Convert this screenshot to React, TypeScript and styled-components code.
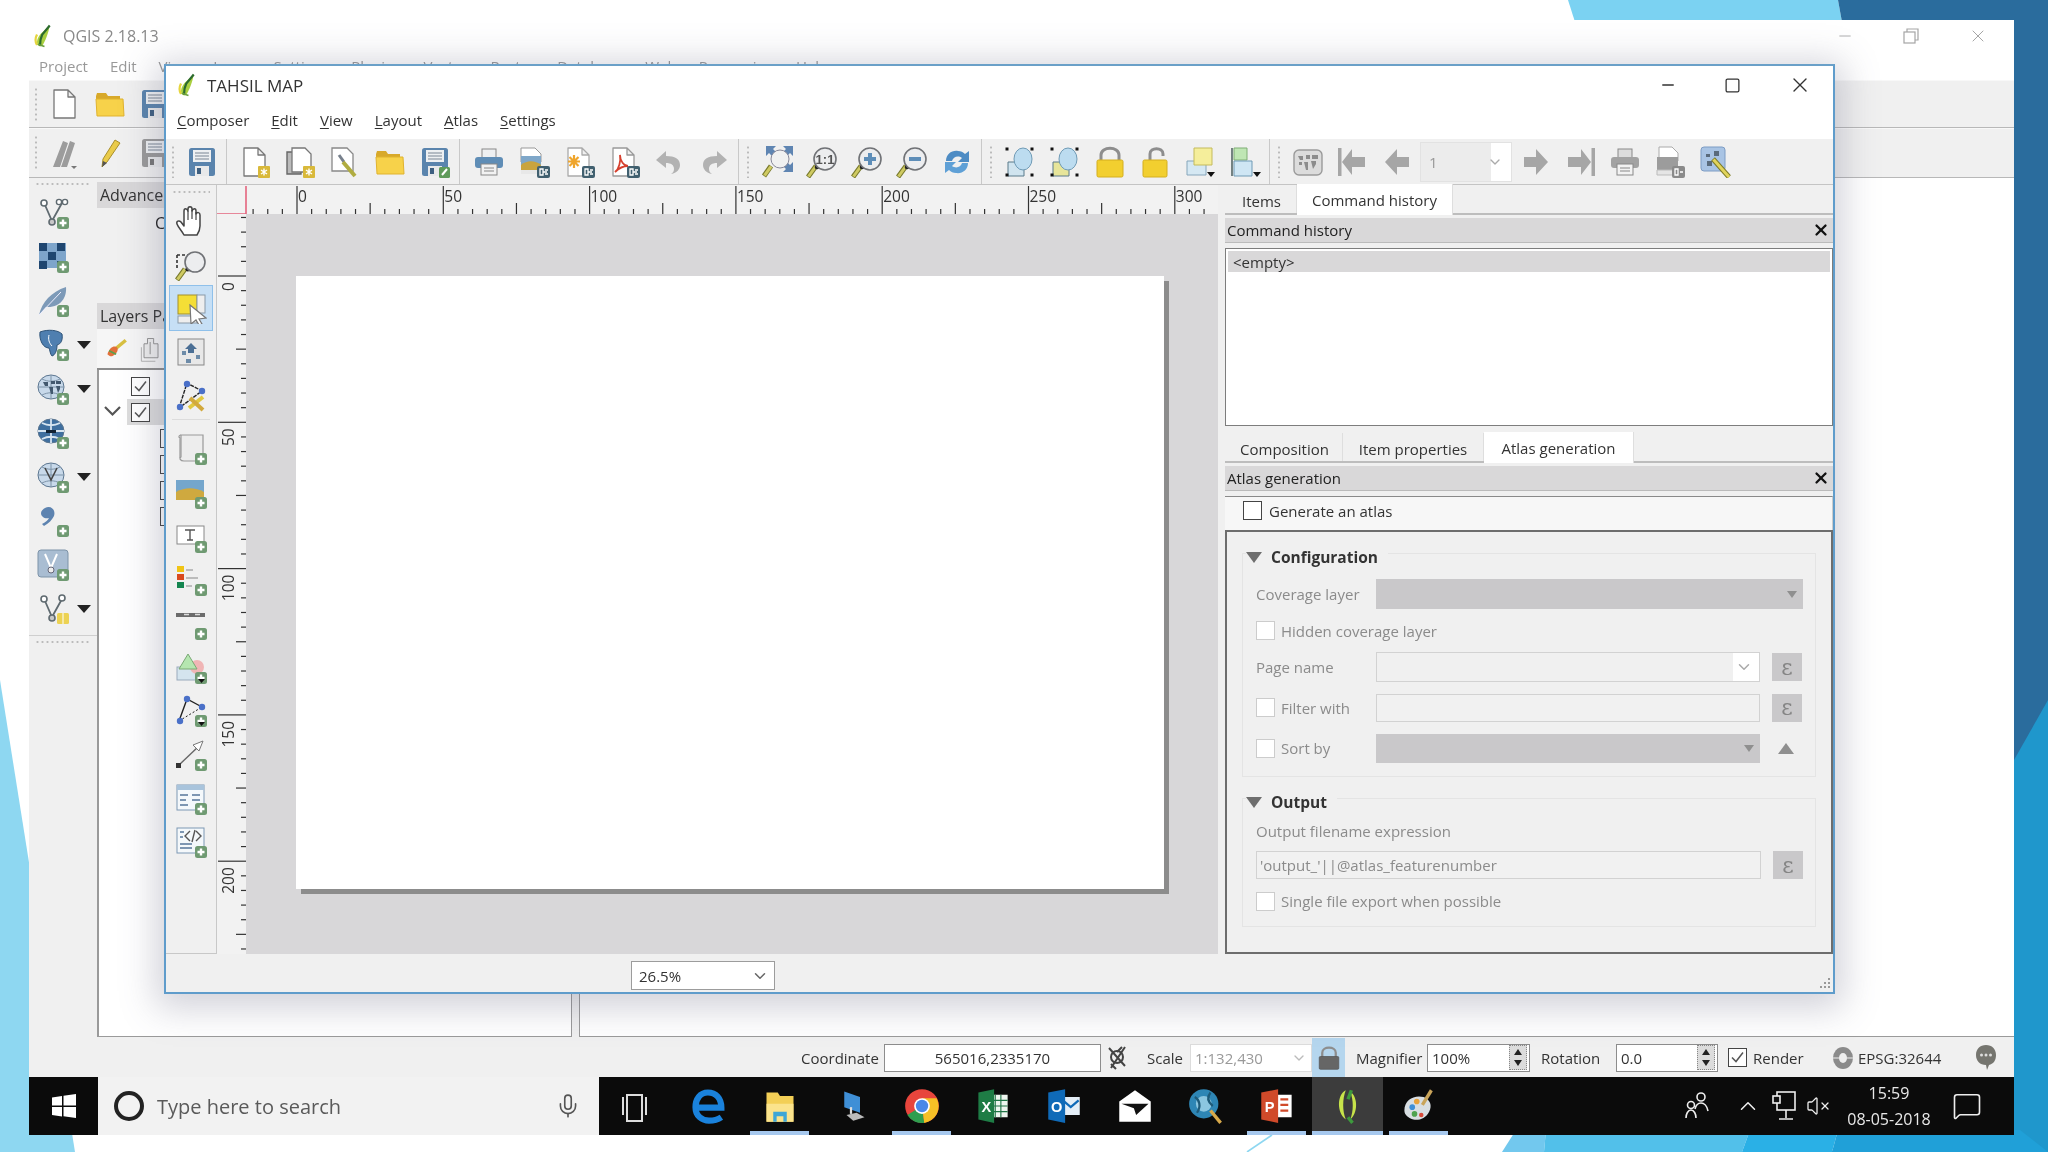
import React from 'react'
import styled, { createGlobalStyle } from 'styled-components'
import { ChevronDown, ChevronUp, Mic, MessageSquare, VolumeX, X, Minus, Square } from 'lucide-react'

const GlobalStyle = createGlobalStyle`
  html, body { margin: 0; padding: 0; background: #fff; }
  body { font-family: "Open Sans", "Noto Sans", "Liberation Sans", sans-serif; color: #222; }
  * { box-sizing: border-box; }
`

/* ---------- drawing helpers ---------- */
const Ico = ({ s = 32, children }: { s?: number; children: React.ReactNode }) => (
  <svg width={s} height={s} viewBox="0 0 32 32" fill="none">{children}</svg>
)
const Plus = ({ x = 20, y = 20 }: { x?: number; y?: number }) => (
  <g>
    <rect x={x} y={y} width="12" height="12" rx="2.5" fill="#6f9a72" />
    <path d={`M${x + 6} ${y + 2.5}v7M${x + 2.5} ${y + 6}h7`} stroke="#fff" strokeWidth="2.4" />
  </g>
)
const Star = ({ x = 19, y = 20 }: { x?: number; y?: number }) => (
  <g>
    <rect x={x} y={y} width="12" height="12" rx="1" fill="#d9b93a" />
    <path d={`M${x + 6} ${y + 2.5}v7M${x + 3} ${y + 4}l6 4M${x + 9} ${y + 4}l-6 4`} stroke="#fff" strokeWidth="1.4" />
  </g>
)
const Badge = () => (
  <g>
    <rect x="19" y="20" width="13" height="12" rx="2" fill="#41606f" />
    <path d="M22 23h3v6h-3zM27 24h3M27 28h3M25 26h4" stroke="#fff" strokeWidth="1.3" />
  </g>
)
const Doc = ({ fill = '#fff', line = '#777' }: { fill?: string; line?: string }) => (
  <path d="M5 2h14l7 7v21H5z M19 2v7h7" fill={fill} stroke={line} strokeWidth="1.3" strokeLinejoin="round" />
)
const Mag = ({ cx = 19, cy = 13, r = 11 }: { cx?: number; cy?: number; r?: number }) => (
  <g>
    <path d="M2 31l8-11" stroke="#77782c" strokeWidth="5" />
    <path d="M2.5 30.5l7.5-10.500" stroke="#cfca62" strokeWidth="3" />
    <circle cx={cx - r * 0.72} cy={cy + r * 0.72} r="2.4" fill="#222" />
    <circle cx={cx} cy={cy} r={r} fill="#ecedef" stroke="#707276" strokeWidth="1.6" />
  </g>
)

const QgisLogo = ({ s = 24 }: { s?: number }) => (
  <Ico s={s}>
    <path d="M25 2L13 13c-5 6-6 11-4 15l3 2 3-1c4-6 8-16 10-27z" fill="#a9cf3f" />
    <path d="M25 2L15 14c-2 4-3 9-3 15" stroke="#2c6b2f" strokeWidth="3" />
    <path d="M8 14c-2 4-3 9 0 14" stroke="#e6d53d" strokeWidth="3" />
    <path d="M9 27l9 3" stroke="#6a9f3e" strokeWidth="2" />
  </Ico>
)
const NewDoc = () => <Ico><Doc /></Ico>
const Folder = () => (
  <Ico>
    <path d="M2 8l1-3h9l2 3h12v4H2z" fill="#d8a92a" />
    <path d="M2 11h27l1 17H3z" fill="#f7d24a" stroke="#e0b32e" />
  </Ico>
)
const Save = ({ gray, tick }: { gray?: boolean; tick?: boolean }) => {
  const b = gray ? '#9a9a9a' : '#5a84ad'
  return (
    <Ico>
      <rect x="3" y="2" width="26" height="28" rx="2.5" fill={b} />
      <rect x="7" y="4" width="18" height="12" fill="#eef0f2" />
      <path d="M9 7h14M9 10h14M9 13h14" stroke="#7a8694" strokeWidth="1.2" />
      <rect x="9" y="20" width="14" height="10" fill="#e8e9ea" />
      <rect x="11" y="22" width="4" height="6" fill={gray ? '#777' : '#3e5f80'} />
      {tick && <rect x="20" y="21" width="11" height="11" rx="1.5" fill="#5f9a5a" />}
      {tick && <path d="M23 29l5-6" stroke="#fff" strokeWidth="2" />}
    </Ico>
  )
}
const NewComposer = () => <Ico><Doc /><Star /></Ico>
const DupComposer = () => (
  <Ico>
    <path d="M3 6h14v22H3z" fill="#bbb" stroke="#666" strokeWidth="1.4" />
    <path d="M8 2h13l6 6v18H8z" fill="#fff" stroke="#777" strokeWidth="1.3" />
    <Star />
  </Ico>
)
const Manager = () => (
  <Ico>
    <path d="M3 2h15l6 6v17H3z" fill="#fff" stroke="#888" strokeWidth="1.3" />
    <path d="M10 9l5 7" stroke="#77808c" strokeWidth="3" />
    <path d="M14 16l12 14" stroke="#b0ac40" strokeWidth="4" />
  </Ico>
)
const Printer = ({ gray }: { gray?: boolean }) => (
  <Ico>
    <rect x="9" y="3" width="14" height="9" fill={gray ? '#dcdcdc' : '#eef0f2'} stroke="#888" />
    <rect x="2" y="11" width="28" height="11" rx="3" fill={gray ? '#a2a2a2' : '#5f8db6'} />
    <rect x="8" y="18" width="16" height="11" fill="#f2f2f2" stroke="#888" />
    <path d="M11 22h10M11 25h10" stroke="#888" />
  </Ico>
)
const ExportImg = () => (
  <Ico>
    <path d="M3 2h14l6 6v8H3z" fill="#fff" stroke="#999" />
    <rect x="3" y="10" width="20" height="14" fill="#7fa7c9" />
    <path d="M3 24v-5c6-5 14-5 20 0v5z" fill="#c9a43e" />
    <path d="M3 24h18v4H3z" fill="#e8e8e8" />
    <Badge />
  </Ico>
)
const ExportSvg = () => (
  <Ico>
    <Doc line="#aaa" />
    <path d="M11 9v13M5 15.500h12M6.500 11l9 9M15.500 11l-9 9" stroke="#efa52c" strokeWidth="2.2" />
    <Badge />
  </Ico>
)
const ExportPdf = () => (
  <Ico>
    <Doc line="#999" />
    <path d="M7 26c4-3 6-11 5-17 0 6 4 11 8 11-5 0-9 2-13 6z" stroke="#d6402e" strokeWidth="1.8" />
    <Badge />
  </Ico>
)
const Undo = ({ flip }: { flip?: boolean }) => (
  <Ico>
    <g transform={flip ? 'matrix(-1 0 0 1 32 0)' : undefined}>
      <path d="M13 5L3 14l10 8v-5c5 0 8 2 8 6 0 2-1 4-3 5 6-1 9-5 9-9 0-6-5-9-14-9z" fill="#b2b2b2" />
    </g>
  </Ico>
)
const ZoomFull = () => (
  <Ico>
    <path d="M5 0h10l-3 3 3 3-4 4-3-3-3 3zM32 0H22l3 3-3 3 4 4 3-3 3 3zM32 26H22l3-3-3-3 4-4 3 3 3-3z" fill="#5f85b2" />
    <circle cx="19" cy="13" r="9" fill="#f1f1f1" stroke="#889" />
    <path d="M3 30l7-10" stroke="#77782c" strokeWidth="5" />
    <path d="M3.500 29.500l6.500-9" stroke="#cfca62" strokeWidth="3" />
  </Ico>
)
const Zoom11 = () => (
  <Ico>
    <Mag />
    <text x="19" y="18" fontSize="13" fontWeight="700" textAnchor="middle" fill="#555" fontFamily="Liberation Sans">1:1</text>
  </Ico>
)
const ZoomIn = ({ minus }: { minus?: boolean }) => (
  <Ico>
    <Mag />
    <path d={minus ? 'M13 13h12' : 'M13 13h12M19 7v12'} stroke="#5d8db8" strokeWidth="4" />
  </Ico>
)
const Refresh = () => (
  <Ico>
    <path d="M5 15c0-7 6-11 12-10 3 0 5 1 7 3l4-3v11H17l4-4c-4-3-9-1-10 3z" fill="#4e8cc4" />
    <path d="M27 17c0 7-6 11-12 10-3 0-5-1-7-3l-4 3V16h11l-4 4c4 3 9 1 10-3z" fill="#5fa0d6" />
  </Ico>
)
const Group = ({ un }: { un?: boolean }) => (
  <Ico>
    <path d="M4 16h16v14H4z" fill={un ? '#e7e59a' : '#d0e4ef'} stroke="#5a7a8a" />
    <ellipse cx="19" cy="13" rx="9" ry="11" fill="#bcdcf0" stroke="#6f9ab5" />
    {[[3, 3], [28, 3], [3, 29], [28, 29]].map(([x, y], i) => <rect key={i} x={x - 1.5} y={y - 1.5} width="3" height="3" fill="#111" />)}
  </Ico>
)
const Lock = ({ open, gray, s }: { open?: boolean; gray?: boolean; s?: number }) => (
  <Ico s={s}>
    <path d={open ? 'M11 15V8c0-7 13-7 13 0v2' : 'M7 15V9c0-9 18-9 18 0v6'} stroke="#8d8d8d" strokeWidth="3" />
    <rect x={open ? 4 : 3} y="14" width={open ? 24 : 26} height="17" rx="1.5" fill={gray ? '#666' : '#f2cf2f'} stroke={gray ? '#555' : '#d4ae1e'} />
  </Ico>
)
const Raise = () => (
  <Ico>
    <path d="M3 15h19v14H3z" fill="#d5e8f3" stroke="#86a6bb" />
    <path d="M10 2h18v17H10z" fill="#f5ee9b" stroke="#c4bb5c" />
    <path d="M23 26h8l-4 5z" fill="#111" />
  </Ico>
)
const Align = () => (
  <Ico>
    <path d="M3 2v28" stroke="#566" strokeWidth="1.6" />
    <path d="M5 2h13v12H5z" fill="#bfe6b4" stroke="#7eae74" />
    <path d="M5 15h18v15H5z" fill="#cfe6f4" stroke="#6f9ab5" />
    <path d="M24 26h8l-4 5z" fill="#111" />
  </Ico>
)
const AtlasMap = () => (
  <Ico>
    <rect x="2" y="4" width="28" height="25" rx="5" fill="#dcdcdc" stroke="#9a9a9a" strokeWidth="1.4" />
    <path d="M6 10h5v4H8zM14 9h4v4h-4zM20 9h6v4h-6zM12 16h4v8h-2zM19 15h5v3l-3 5zM7 16h3v3H7z" fill="#8c8c8c" />
  </Ico>
)
const Arrow = ({ dir, end }: { dir: 'l' | 'r'; end?: boolean }) => (
  <Ico>
    <g transform={dir === 'r' ? 'matrix(-1 0 0 1 32 0)' : undefined}>
      <path d={end ? 'M15 3L5 16l10 13v-8h13v-10H15z' : 'M15 3L3 16l12 13v-8h12v-10H15z'} fill="#a6a6a6" />
      {end && <rect x="1" y="2" width="3.5" height="28" fill="#a6a6a6" />}
    </g>
  </Ico>
)
const ExportGray = () => (
  <Ico>
    <path d="M5 1h13l6 6v8H5z" fill="#fff" stroke="#aaa" />
    <rect x="3" y="11" width="21" height="13" fill="#9c9c9c" />
    <path d="M3 24h21v5H3z" fill="#e5e5e5" stroke="#bbb" />
    <rect x="18" y="20" width="13" height="12" rx="2" fill="#8a8a8a" />
    <path d="M21 23h3v6h-3zM26 26h3" stroke="#fff" strokeWidth="1.3" />
  </Ico>
)
const AtlasSettings = () => (
  <Ico>
    <rect x="2" y="1" width="24" height="24" rx="3" fill="#a9c4e4" stroke="#7d9cc4" />
    <path d="M7 8h4v3H7zM15 5h5v5h-5zM8 15h5v5H8z" fill="#5a6b7c" />
    <path d="M14 13l16 18" stroke="#7c7a26" strokeWidth="5" />
    <path d="M14.500 13.500l15.500 17.500" stroke="#e1d45c" strokeWidth="3" />
  </Ico>
)
const Hand = () => (
  <Ico>
    <path d="M9 30c-2-4-6-8-7-11-1-3 2-4 4-2l3 4V6c0-3 3-3 4 0V4c0-3 4-3 4 0v2c1-3 4-3 4 0v3c1-2 4-2 4 1v11c0 4-1 6-3 9z" fill="#fff" stroke="#444" strokeWidth="1.5" strokeLinejoin="round" />
    <path d="M13 6v9M17 5v9M21 7v8" stroke="#444" strokeWidth="1.2" />
  </Ico>
)
const MoveContent = () => (
  <Ico>
    <rect x="3" y="3" width="26" height="26" fill="#e8e8e8" stroke="#888" />
    <path d="M16 7l6 6h-3v4h-6v-4h-3z" fill="#4b6f95" />
    <path d="M7 15h4v4H7zM21 19h4v4h-4zM11 23h5v4h-5z" fill="#6d8ba8" />
  </Ico>
)
const ZoomRect = () => (
  <Ico>
    <path d="M2 6h13M2 6v15" stroke="#333" strokeWidth="1.6" strokeDasharray="3 2" />
    <Mag cx={20} cy={13} r={10} />
  </Ico>
)
const SelectTool = () => (
  <Ico>
    <rect x="3" y="3" width="19" height="19" fill="#f4de36" stroke="#a38f2c" />
    <rect x="22" y="3" width="8" height="18" fill="#eee" stroke="#8a9aa8" />
    <rect x="3" y="24" width="19" height="7" fill="#eee" stroke="#8a9aa8" />
    <path d="M15 13l16 13-7 1 3 5-3 1-3-5-5 4z" fill="#fff" stroke="#777" strokeWidth="1.2" />
  </Ico>
)
const NodeTool = () => (
  <Ico>
    <path d="M4 28L12 3l15 8z" stroke="#222" strokeWidth="1.4" strokeDasharray="4 1" />
    <circle cx="12" cy="4" r="3.200" fill="#4a70c8" /><circle cx="27" cy="11" r="3.200" fill="#4a70c8" /><circle cx="5" cy="27" r="3.200" fill="#4a70c8" />
    <path d="M14 28l14-11" stroke="#e0c840" strokeWidth="4" /><path d="M15 18l13 12" stroke="#d2a93c" strokeWidth="4" />
  </Ico>
)
const AddMap = () => (
  <Ico>
    <path d="M6 2h22v26H9c-4 0-5-3-3-4z" fill="#ededed" stroke="#999" strokeWidth="1.2" />
    <path d="M6 2c-2 0-3 2-1 3v20" stroke="#999" strokeWidth="1.2" />
    <Plus />
  </Ico>
)
const AddImage = () => (
  <Ico>
    <rect x="1" y="3" width="28" height="20" fill="#74a6cc" />
    <path d="M1 23v-8c9-5 19-5 28 0v8z" fill="#cfa93f" />
    <Plus />
  </Ico>
)
const AddLabel = () => (
  <Ico>
    <rect x="2" y="5" width="27" height="18" fill="#fff" stroke="#888" />
    <path d="M10 9h10M15 9v10M12 19h6" stroke="#555" strokeWidth="1.4" />
    <Plus />
  </Ico>
)
const AddLegend = () => (
  <Ico>
    <rect x="2" y="2" width="7" height="6" fill="#f0c415" /><rect x="2" y="10" width="7" height="6" fill="#d94a1e" /><rect x="2" y="18" width="7" height="6" fill="#14854f" />
    <path d="M11 6h7M11 14h12M11 22h6" stroke="#aaa" strokeWidth="1.6" />
    <Plus />
  </Ico>
)
const AddBar = () => (
  <Ico>
    <rect x="1" y="5" width="29" height="4" fill="#6b6b6b" />
    <path d="M9 6.500h5M20 6.500h5" stroke="#ddd" strokeWidth="1.400" />
    <Plus />
  </Ico>
)
const AddShape = () => (
  <Ico>
    <rect x="2" y="15" width="21" height="13" fill="#d4e4ee" stroke="#9ab" />
    <circle cx="22" cy="15" r="7" fill="#f0b5b5" />
    <path d="M13 2l9 15H4z" fill="#b5e6b0" stroke="#7aa975" />
    <Plus />
    <path d="M23 27h7l-3.500 4z" fill="#111" />
  </Ico>
)
const AddNode = () => (
  <Ico>
    <path d="M4 26L12 4l15 8" stroke="#222" strokeWidth="1.400" /><path d="M4 26l23-14" stroke="#222" strokeDasharray="2 2" />
    <circle cx="12" cy="4" r="3.200" fill="#4a70c8" /><circle cx="27" cy="12" r="3.200" fill="#4a70c8" /><circle cx="5" cy="26" r="3.200" fill="#4a70c8" />
    <Plus />
    <path d="M23 27h7l-3.500 4z" fill="#111" />
  </Ico>
)
const AddArrow = () => (
  <Ico>
    <path d="M4 26L24 7" stroke="#666" strokeWidth="1.400" />
    <rect x="1" y="24" width="5" height="5" fill="#333" />
    <path d="M28 2l-10 4 6 6z" fill="#fff" stroke="#777" />
    <Plus />
  </Ico>
)
const AddTable = () => (
  <Ico>
    <rect x="2" y="2" width="27" height="25" fill="#f4f8fb" stroke="#7c98b4" />
    <rect x="2" y="2" width="27" height="5" fill="#a9c4dc" />
    <path d="M5 12h8M17 12h8M5 17h6M17 17h8M5 22h8" stroke="#55769a" strokeWidth="1.4" />
    <Plus />
  </Ico>
)
const AddHtml = () => (
  <Ico>
    <rect x="2" y="2" width="27" height="25" fill="#f4f8fb" stroke="#7c98b4" />
    <path d="M15 5l-5 5 5 5M21 5l5 5-5 5M20 4l-3 12" stroke="#555" strokeWidth="1.400" />
    <path d="M5 6h4M5 11h3M5 18h12M5 22h12" stroke="#55769a" strokeWidth="1.600" />
    <Plus />
  </Ico>
)
const AddLine = () => (
  <Ico>
    <path d="M8 8L15 24 25 6" stroke="#5f6a70" strokeWidth="1.800" />
    <circle cx="7" cy="6" r="3" fill="#fff" stroke="#5f6a70" strokeWidth="1.600" /><circle cx="15" cy="25" r="3" fill="#c8c8c8" stroke="#5f6a70" strokeWidth="1.600" />
    <circle cx="22" cy="5" r="2.600" fill="#fff" stroke="#5f6a70" strokeWidth="1.400" /><circle cx="28" cy="5" r="2.600" fill="#fff" stroke="#5f6a70" strokeWidth="1.400" />
    <Plus />
  </Ico>
)
const AddGrid = () => (
  <Ico>
    <rect x="2" y="2" width="27" height="25" fill="#7ea5cb" />
    {[[2, 2], [20, 2], [11, 11], [2, 20], [20, 20]].map(([x, y], i) => <rect key={i} x={x} y={y} width="8" height="8" fill="#1f4670" />)}
    <Plus />
  </Ico>
)
const Feather = () => (
  <Ico>
    <path d="M2 30C5 17 14 7 29 2c1 10-5 21-20 20z" fill="#7d9ab8" />
    <path d="M2 30L24 7" stroke="#eef" strokeWidth="1" />
    <Plus />
  </Ico>
)
const Elephant = () => (
  <Ico>
    <path d="M3 3c8-3 18-2 22 2 1 6-1 10-5 11 0 6-2 10-5 11-2-2-2-6-3-8-6 0-10-8-9-16z" fill="#4f7fb0" stroke="#2e5378" />
    <path d="M12 6c-1 4 0 8 3 11" stroke="#fff" />
    <Plus />
  </Ico>
)
const Globe = ({ v, dark }: { v?: boolean; dark?: boolean }) => (
  <Ico>
    <ellipse cx="14" cy="14" rx="13" ry="12" fill={dark ? '#3f6f9f' : '#c8d9ea'} stroke="#5c7690" />
    <path d="M1 14h26M14 2v24M5 6c6 3 12 3 18 0M5 22c6-3 12-3 18 0" stroke={dark ? '#d6e4f0' : '#7d93a8'} strokeWidth={dark ? 1.800 : 1} />
    {dark && <path d="M9 13h10v3H9z" fill="#123" />}
    {v && <path d="M8 7l6 12 6-12" stroke="#444" strokeWidth="1.600" />}
    {!v && !dark && <path d="M6 9h5v4H8zM14 8h4v3h-4zM19 8h5v3h-5zM12 14h4v7h-2zM19 13h4v3l-2 4z" fill="#42586e" />}
    <Plus />
  </Ico>
)
const Comma = () => (
  <Ico>
    <path d="M8 3c6-3 11 2 9 8-2 4-5 7-10 10l-2-2c4-2 6-4 7-6-4 1-8-1-8-5 0-2 2-4 4-5z" fill="#5d83b0" />
    <Plus />
  </Ico>
)
const Wms = () => (
  <Ico>
    <rect x="1" y="1" width="30" height="27" rx="3" fill="#a9bdd2" stroke="#7d93a8" />
    <path d="M8 5l6 14 6-14" stroke="#fff" strokeWidth="2" /><circle cx="14" cy="21" r="3" fill="#eee" stroke="#667" />
    <Plus />
  </Ico>
)
const Line2 = () => (
  <Ico>
    <path d="M8 8L15 24 25 6" stroke="#5f6a70" strokeWidth="1.800" />
    <circle cx="7" cy="6" r="3" fill="#fff" stroke="#5f6a70" strokeWidth="1.600" /><circle cx="15" cy="25" r="3" fill="#c8c8c8" stroke="#5f6a70" strokeWidth="1.600" />
    <circle cx="25" cy="5" r="3" fill="#fff" stroke="#5f6a70" strokeWidth="1.600" />
    <rect x="20" y="20" width="12" height="11" rx="1.500" fill="#ecd253" />
    <path d="M26 20v11" stroke="#fff" />
  </Ico>
)
const Caret = () => <svg width="14" height="8" viewBox="0 0 14 8"><path d="M0 0h14L7 8z" fill="#222" /></svg>
const Pencils = () => (
  <Ico>
    <path d="M4 30L14 4l5 2-8 24zM12 30L21 4l5 2-8 24z" fill="#9c9c9c" />
    <path d="M22 29h6l-3 3z" fill="#777" />
  </Ico>
)
const Pencil = () => (
  <Ico>
    <path d="M8 30l1-8L21 3l5 3-13 19z" fill="#eacb4a" stroke="#a98f2c" />
    <path d="M8 30l1-6 4 2z" fill="#555" />
  </Ico>
)
const Brush = () => (
  <Ico s={28}>
    <path d="M26 6L14 16" stroke="#d8c041" strokeWidth="4" />
    <path d="M5 22c3-8 7-10 11-8 2 3 0 7-5 10-2 1-4 0-6-2z" fill="#e2703a" />
    <path d="M7 18l8 4" stroke="#5ba04d" strokeWidth="2" />
  </Ico>
)
const Clip = () => (
  <Ico s={28}>
    <path d="M12 4h7v6h5v16H8V10h4z" fill="#eee" stroke="#888" />
    <path d="M5 14v16h16" stroke="#aaa" />
    <path d="M15 8v14" stroke="#888" />
  </Ico>
)
const Proj = () => (
  <svg width="17" height="13" viewBox="0 0 17 13"><path d="M1 1l7.500 7.500 7.500-7.500" stroke="#555" strokeWidth="2.200" fill="none" /></svg>
)
const RestoreIcon = () => (
  <svg width="16" height="16" viewBox="0 0 16 16" fill="none" stroke="#a5a5a5" strokeWidth="1.200"><path d="M4 4V1h11v11h-3" /><rect x="1" y="4" width="11" height="11" /></svg>
)
const TickMark = () => (
  <svg width="17" height="17" viewBox="0 0 17 17" fill="none"><path d="M3 8.500l4 4 7-9" stroke="#555" strokeWidth="1.500" /></svg>
)

/* taskbar logos */
const WinLogo = () => (
  <svg width="24" height="24" viewBox="0 0 24 24"><path d="M0 3.500L10 2v9.500H0zM11.500 1.800L24 0v11.500H11.500zM0 13h10v9.500L0 21zM11.500 13H24v11l-12.500-1.800z" fill="#fff" /></svg>
)
const EdgeLogo = () => (
  <Ico s={36}>
    <path d="M6 17.500h21C27 9 22 4 15 4 8 4 4 10 4 17c0 8 6 12 12 12 4 0 8-1 11-3" stroke="#1a82dc" strokeWidth="5.500" />
  </Ico>
)
const ChromeLogo = () => (
  <Ico s={36}>
    <circle cx="16" cy="16" r="15" fill="#e8453c" />
    <path d="M16 16L3 24a15 15 0 0 0 15 7z" fill="#2f9e4f" />
    <path d="M16 16l2 15a15 15 0 0 0 11-22H16z" fill="#f6c026" />
    <circle cx="16" cy="16" r="7" fill="#fff" /><circle cx="16" cy="16" r="5.500" fill="#4a88e8" />
  </Ico>
)
const ExplorerLogo = () => (
  <Ico s={36}>
    <path d="M4 4h10l2 3h12v23H4z" fill="#f3cf56" />
    <path d="M4 14h24v16H4z" fill="#fbe38c" />
    <path d="M10 21h12v9h-3v-5h-6v5h-3z" fill="#3ea6d6" />
  </Ico>
)
const PcLogo = () => (
  <Ico s={36}>
    <path d="M10 3l14 5v14l-14-5z" fill="#3f8fd6" />
    <path d="M12 24l9-2 7 4-10 3z" fill="#bbb" />
    <path d="M16 17v6" stroke="#ddd" strokeWidth="2" />
  </Ico>
)
const ExcelLogo = () => (
  <Ico s={36}>
    <rect x="15" y="6" width="14" height="20" fill="#eef5ef" />
    <path d="M18 6v20M23 6v20M15 11h14M15 16h14M15 21h14" stroke="#1f7345" />
    <path d="M3 4l14-3v30L3 28z" fill="#1e7c45" />
    <text x="10" y="21" fontSize="13" fontWeight="700" fill="#fff" textAnchor="middle" fontFamily="Liberation Sans">X</text>
  </Ico>
)
const OutlookLogo = () => (
  <Ico s={36}>
    <rect x="14" y="8" width="16" height="16" fill="#e4eef7" />
    <path d="M15 11l7 6 7-6" stroke="#0f6ab8" strokeWidth="2" />
    <path d="M2 4l15-3v30L2 28z" fill="#0f6ab8" />
    <text x="9.500" y="21" fontSize="13" fontWeight="700" fill="#fff" textAnchor="middle" fontFamily="Liberation Sans">O</text>
  </Ico>
)
const MailLogo = () => (
  <Ico s={36}>
    <path d="M2 12L16 2l14 10v18H2z" fill="#fff" />
    <path d="M4 14l24 0-11 10-2-6z" fill="#111" />
  </Ico>
)
const SearchGlobe = () => (
  <Ico s={36}>
    <circle cx="14" cy="14" r="13" fill="#2e86b5" />
    <circle cx="14" cy="14" r="7" fill="#8cc6e0" />
    <path d="M6 8c4 2 6 8 2 14M20 4c-3 4-3 8 2 12" stroke="#1e5a78" strokeWidth="2" />
    <path d="M20 20l9 11" stroke="#d8a94a" strokeWidth="3" />
  </Ico>
)
const PptLogo = () => (
  <Ico s={36}>
    <rect x="14" y="6" width="15" height="20" fill="#fff" />
    <path d="M19 10h7M19 15h7M19 20h7" stroke="#d04a2a" strokeWidth="2" />
    <path d="M2 4l15-3v30L2 28z" fill="#d04a2a" />
    <text x="9.500" y="21" fontSize="13" fontWeight="700" fill="#fff" textAnchor="middle" fontFamily="Liberation Sans">P</text>
  </Ico>
)
const QgisTask = () => (
  <Ico s={36}>
    <path d="M14 2C6 6 6 22 14 28c-3-8-3-18 0-26zM18 3c7 5 7 19 0 25 3-8 3-17 0-25z" fill="#c7e34a" />
    <path d="M16 26l4 5" stroke="#3d9a3d" strokeWidth="3" />
    <path d="M19 2l-3 8" stroke="#3d9a3d" strokeWidth="3" />
  </Ico>
)
const PaintLogo = () => (
  <Ico s={36}>
    <path d="M3 20C3 10 12 6 20 8c6 2 8 8 5 13-3 6-9 8-14 7-4-1-8-4-8-8z" fill="#d8dee2" />
    <circle cx="10" cy="17" r="2.500" fill="#3f8fd6" /><circle cx="14" cy="12" r="2.500" fill="#e8a23a" /><circle cx="12" cy="23" r="2.500" fill="#4fa34f" /><circle cx="18" cy="24" r="2" fill="#d84a3a" />
    <path d="M19 15L27 2" stroke="#c9a45a" strokeWidth="3" />
  </Ico>
)
const People = () => (
  <svg width="27" height="30" viewBox="0 0 27 30" fill="none" stroke="#eee" strokeWidth="1.600">
    <circle cx="17" cy="6" r="4" /><path d="M11 18c1-4 3-6 6-6s6 3 7 8" />
    <circle cx="7" cy="14" r="3.500" /><path d="M2 27c0-4 2-8 5-8s5 4 5 8" />
  </svg>
)
const Network = () => (
  <svg width="26" height="32" viewBox="0 0 26 32" fill="none" stroke="#eee" strokeWidth="1.600">
    <rect x="6" y="2" width="18" height="18" /><path d="M15 20v8M8 29h14" /><rect x="2" y="6" width="7" height="7" fill="#111" />
  </svg>
)
const MsgBubble = () => (
  <svg width="22" height="28" viewBox="0 0 22 28"><path d="M11 1c6 0 10 4 10 10s-3 9-7 10l-2 5-1-5C5 21 1 17 1 11S5 1 11 1z" fill="#75756f" /><circle cx="6.500" cy="11" r="1.500" fill="#ddd" /><circle cx="11" cy="11" r="1.500" fill="#ddd" /><circle cx="15.500" cy="11" r="1.500" fill="#ddd" /></svg>
)
const Globe2 = () => (
  <svg width="22" height="24" viewBox="0 0 22 24"><ellipse cx="11" cy="12" rx="10" ry="11" fill="#8b8b8b" /><ellipse cx="11" cy="12" rx="4" ry="5" fill="#eee" /><path d="M1 12h6M15 12h6" stroke="#eee" /></svg>
)
const Compass = () => (
  <svg width="24" height="28" viewBox="0 0 24 28" fill="none" stroke="#444" strokeWidth="2"><path d="M4 4l16 18M20 3L6 24" /><circle cx="12" cy="13" r="6" /><path d="M6 20l5 5M17 3l-5 5" /></svg>
)
const Grip = () => (
  <svg width="10" height="10" viewBox="0 0 10 10" fill="#999"><rect x="8" y="0" width="2" height="2" /><rect x="4" y="4" width="2" height="2" /><rect x="8" y="4" width="2" height="2" /><rect x="0" y="8" width="2" height="2" /><rect x="4" y="8" width="2" height="2" /><rect x="8" y="8" width="2" height="2" /></svg>
)

/* ---------- rulers: ticks come from the scale ---------- */
const HORIZONTAL_ORIGIN = 80
const VERTICAL_ORIGIN = 62
const MM = 2.926

const HRulerDrawing = () => {
  const ticks: React.ReactNode[] = []
  for (let u = -25; u <= 310; u += 5) {
    const x = HORIZONTAL_ORIGIN + u * MM
    if (x < 30) continue
    const top = u % 50 === 0 ? 1 : u % 25 === 0 ? 18 : 24
    ticks.push(<line key={u} x1={x} x2={x} y1={top} y2={29} stroke="#333" strokeWidth="1.200" />)
    if (u % 50 === 0 && u >= 0) ticks.push(<text key={`t${u}`} x={x + 1} y={17} fontSize="15.500" fill="#333" fontFamily="Open Sans">{u}</text>)
  }
  return <svg width="1001" height="29" viewBox="0 0 1001 29">{ticks}<path d="M29 1v28H0" stroke="#e4647e" strokeWidth="1.600" fill="none" /></svg>
}
const VRulerDrawing = () => {
  const ticks: React.ReactNode[] = []
  for (let u = -20; u <= 230; u += 5) {
    const y = VERTICAL_ORIGIN + u * MM
    if (y < 3 || y > 738) continue
    const left = u % 50 === 0 ? 1 : u % 25 === 0 ? 19 : 24
    ticks.push(<line key={u} x1={left} x2={29} y1={y} y2={y} stroke="#333" strokeWidth="1.200" />)
    if (u % 50 === 0 && u >= 0) ticks.push(<text key={`t${u}`} transform={`translate(17 ${y + 6}) rotate(-90)`} textAnchor="end" fontSize="15.500" fill="#333" fontFamily="Open Sans">{u}</text>)
  }
  return <svg width="29" height="741" viewBox="0 0 29 741">{ticks}</svg>
}

/* ---------- page ---------- */
const Desktop = styled.div`
  position: relative;
  width: 2048px;
  height: 1152px;
  overflow: hidden;
  background: #fff;
  padding: 20px 34px 17px 29px;
  filter: blur(0.45px);
`
const Backdrop = styled.svg`
  position: absolute;
  inset: 0;
`
const MainWindow = styled.div`
  position: relative;
  display: flex;
  flex-direction: column;
  height: 100%;
  background: #fff;
`
const TitleBar = styled.div`
  display: flex;
  align-items: center;
  height: 32px;
  padding-left: 2px;
  font-size: 16px;
  color: #8a8a8a;
  gap: 8px;
`
const MainControls = styled.div`
  display: flex;
  margin-left: auto;
  color: #a5a5a5;
  margin-right: 26px;
  gap: 49px;
  align-items: center;
`
const MainMenu = styled.div`
  display: flex;
  height: 28px;
  align-items: center;
  padding-left: 10px;
  gap: 22px;
  font-size: 15px;
  color: #999;
  overflow: hidden;
`
const MainToolbar = styled.div<{ $h: number }>`
  display: flex;
  align-items: center;
  height: ${p => p.$h}px;
  background: #f0f0f0;
  border-bottom: 1px solid #b8b8b8;
  border-top: 1px solid #f8f8f8;
`
const GripV = styled.span`
  width: 4px;
  align-self: stretch;
  margin: 6px 4px 6px 5px;
  background: radial-gradient(circle, #bbb 1px, transparent 1.200px) 0 0 / 4px 5px;
`
const GripH = styled.div`
  height: 4px;
  margin: 4px 6px 5px;
  background: radial-gradient(circle, #bbb 1px, transparent 1.200px) 0 0 / 5px 4px;
`
const MainSlot = styled.span`
  display: flex;
  width: 45px;
  justify-content: center;
  align-items: center;
  flex: none;
`
const Workspace = styled.div`
  display: flex;
  flex: 1;
  min-height: 0;
  background: #f0f0f0;
`
const SideBar = styled.div`
  width: 68px;
  flex: none;
  display: flex;
  flex-direction: column;
`
const SideIcons = styled.div`
  border-bottom: 1px solid #cfcfcf;
  padding-bottom: 4px;
`
const SideRow = styled.div`
  display: flex;
  align-items: center;
  height: 44px;
  padding-left: 8px;
  gap: 8px;
`
const Docks = styled.div`
  width: 475px;
  flex: none;
  display: flex;
  flex-direction: column;
  border-right: 1px solid #9a9a9a;
  padding-top: 4px;
`
const DockTitle = styled.div`
  height: 26px;
  display: flex;
  align-items: center;
  background: #d9d8d9;
  padding-left: 3px;
  font-size: 16px;
  color: #333;
`
const DockFill = styled.div`
  height: 95px;
  padding: 4px 0 0 58px;
  font-size: 16px;
`
const DockTools = styled.div`
  display: flex;
  align-items: center;
  height: 41px;
  gap: 6px;
  padding-left: 6px;
  background: #f6f6f6;
  border-bottom: 2px solid #8c8c8c;
`
const LayerTree = styled.div`
  flex: 1;
  background: #fff;
  border-left: 2px solid #9a9a9a;
  border-bottom: 1px solid #9a9a9a;
  padding-top: 3px;
`
const LayerRow = styled.div<{ $selected?: boolean; $indent?: number }>`
  display: flex;
  align-items: center;
  height: 26px;
  padding-left: ${p => p.$indent ?? 5}px;
  background: ${p => (p.$selected ? 'linear-gradient(90deg,#fff 0 28px,#dcdcdc 28px)' : 'none')};
  gap: 10px;
`
const CheckSlot = styled.span`
  width: 17px;
  display: flex;
  flex: none;
`
const MapArea = styled.div`
  flex: 1;
  background: #fff;
  margin-left: 7px;
  border-left: 1px solid #9a9a9a;
  border-bottom: 1px solid #9a9a9a;
`
const StatusBar = styled.div`
  display: flex;
  align-items: center;
  height: 40px;
  padding-left: 772px;
  background: #f0f0f0;
  border-top: 1px solid #f0f0f0;
  font-size: 15px;
  color: #333;
`
const StatusLabel = styled.span<{ $w: number }>`
  width: ${p => p.$w}px;
  flex: none;
  white-space: nowrap;
`
const StatusInput = styled.div<{ $w: number; $center?: boolean; $muted?: boolean }>`
  width: ${p => p.$w}px;
  height: 28px;
  flex: none;
  display: flex;
  align-items: center;
  justify-content: ${p => (p.$center ? 'center' : 'flex-start')};
  padding: 0 4px;
  background: #fff;
  border: 1px solid ${p => (p.$muted ? '#dcdcdc' : '#8d8d8d')};
  color: ${p => (p.$muted ? '#999' : '#333')};
  position: relative;
`
const SpinButtons = styled.span`
  margin-left: auto;
  margin-right: -2px;
  width: 18px;
  height: 25px;
  background: #dcdcdc;
  border: 1px dotted #888;
  display: flex;
  flex-direction: column;
  align-items: center;
  justify-content: space-around;
  &::before, &::after {
    content: '';
    border-left: 4px solid transparent;
    border-right: 4px solid transparent;
  }
  &::before { border-bottom: 6px solid #222; }
  &::after { border-top: 6px solid #222; }
`
const ScaleArrow = styled.span`
  margin-left: auto;
  display: flex;
  color: #bbb;
`
const StatusIcon = styled.span<{ $w: number; $on?: boolean }>`
  width: ${p => p.$w}px;
  flex: none;
  display: flex;
  align-items: center;
  justify-content: center;
  height: 39px;
  background: ${p => (p.$on ? '#b5d6ee' : 'none')};
`
const Taskbar = styled.div`
  display: flex;
  align-items: center;
  height: 58px;
  background: #0b0b0b;
  color: #eee;
`
const StartButton = styled.div`
  width: 69px;
  display: flex;
  justify-content: center;
`
const SearchBox = styled.div`
  width: 501px;
  height: 100%;
  display: flex;
  align-items: center;
  background: #f2f2f2;
  padding: 0 18px 0 16px;
  color: #5a5a5a;
  font-size: 20px;
`
const Cortana = styled.span`
  width: 30px;
  height: 30px;
  border-radius: 50%;
  border: 4px solid #222;
  margin-right: 13px;
`
const SearchMic = styled.span`
  margin-left: auto;
  display: flex;
  color: #555;
`
const TaskApps = styled.div`
  display: flex;
  height: 100%;
  padding-left: 3px;
`
const TaskApp = styled.span<{ $open?: boolean; $focused?: boolean }>`
  width: ${p => (p.$focused ? 71 : 59)}px;
  margin: 0 ${p => (p.$focused ? 0 : 6)}px;
  display: flex;
  align-items: center;
  justify-content: center;
  background: ${p => (p.$focused ? '#3c3c3c' : 'none')};
  box-shadow: ${p => (p.$open || p.$focused ? 'inset 0 -4px 0 #a6c8ee' : 'none')};
`
const TaskView = styled.span`
  width: 25px;
  height: 18px;
  margin-right: 6px;
  border: 2px solid #ddd;
  border-top: 0;
  border-bottom: 0;
  display: flex;
  justify-content: center;
  &::before {
    content: '';
    width: 13px;
    height: 24px;
    margin-top: -3px;
    border: 2px solid #ddd;
    background: #0b0b0b;
  }
`
const Tray = styled.div`
  margin-left: auto;
  display: flex;
  align-items: center;
  height: 100%;
`
const TrayIcon = styled.span<{ $w: number }>`
  width: ${p => p.$w}px;
  display: flex;
  justify-content: center;
`
const Clock = styled.div`
  width: 110px;
  text-align: center;
  font-size: 16px;
  line-height: 26px;
  color: #e8e8e8;
`

/* composer window */
const Composer = styled.div`
  position: absolute;
  left: 164px;
  top: 64px;
  width: 1671px;
  height: 930px;
  display: flex;
  flex-direction: column;
  background: #f0f0f0;
  border: 2px solid #5f9ccb;
  border-top-color: #6aa0c8;
  box-shadow: 0 6px 34px 8px rgba(90, 90, 120, 0.28);
`
const ComposerTitle = styled.div`
  display: flex;
  align-items: center;
  height: 38px;
  padding-left: 9px;
  background: #fff;
  font-size: 17px;
  color: #333;
  gap: 8px;
`
const Controls = styled.div`
  display: flex;
  align-items: center;
  margin-left: auto;
  margin-right: 21px;
  gap: 47px;
  color: #333;
`
const ComposerMenu = styled.div`
  display: flex;
  align-items: center;
  height: 35px;
  padding: 0 0 3px 11px;
  gap: 22px;
  background: #fff;
  font-size: 15px;
  color: #333;
`
const ComposerToolbar = styled.div`
  display: flex;
  align-items: center;
  height: 46px;
  background: #f0f0f0;
  border-bottom: 1px solid #c4c4c4;
`
const Slot = styled.span`
  width: 45px;
  flex: none;
  display: flex;
  justify-content: center;
  align-items: center;
`
const Sep = styled.span<{ $extra?: number }>`
  width: 1px;
  flex: none;
  align-self: stretch;
  background: #c9c9c9;
  margin: 0 ${p => 2 + (p.$extra || 0)}px 0 2px;
`
const PageCombo = styled.div`
  width: 92px;
  height: 40px;
  flex: none;
  display: flex;
  align-items: center;
  padding: 0 8px;
  background: linear-gradient(90deg, #ececec 0 70px, #fff 70px);
  border: 1px solid #e2e2e2;
  color: #999;
  font-size: 15px;
`
const ComboArrow = styled.span`
  margin-left: auto;
  display: flex;
  color: #aaa;
`
const ComposerMain = styled.div`
  flex: 1;
  min-height: 0;
  display: flex;
`
const ToolColumn = styled.div`
  width: 51px;
  flex: none;
  border-right: 1px solid #c8c8c8;
  border-bottom: 1px solid #c8c8c8;
  padding-top: 1px;
`
const ToolSlot = styled.div<{ $active?: boolean }>`
  height: 43.700px;
  margin: 0 4px;
  display: flex;
  justify-content: center;
  align-items: center;
  background: ${p => (p.$active ? '#c6dff5' : 'none')};
  outline: ${p => (p.$active ? '1px solid #8fc0ea' : 'none')};
`
const ToolSep = styled.div`
  height: 8px;
  margin: 0 6px;
  border-top: 1px solid #dcdcdc;
  margin-top: 2px;
`
const CanvasArea = styled.div`
  width: 1001px;
  flex: none;
  display: flex;
  flex-direction: column;
`
const HRuler = styled.div`
  height: 29px;
  flex: none;
  overflow: hidden;
  background: #f2f2f2;
`
const CanvasRow = styled.div`
  flex: 1;
  display: flex;
  min-height: 0;
`
const VRuler = styled.div`
  width: 29px;
  flex: none;
  background: #f2f2f2;
  overflow: hidden;
`
const Canvas = styled.div`
  flex: 1;
  background: #d8d7d9;
  padding: 62px 0 0 50px;
`
const Page = styled.div`
  width: 868px;
  height: 613px;
  background: #fff;
  box-shadow: 5px 5px 0 #8c8c8c;
`
const DockColumn = styled.div`
  width: 608px;
  flex: none;
  margin-left: 7px;
  display: flex;
  flex-direction: column;
`
const TabRow = styled.div`
  display: flex;
  align-items: flex-end;
  height: 30px;
  flex: none;
  padding-left: 2px;
  border-bottom: 2px solid #bdbdbd;
  font-size: 15px;
  color: #333;
`
const Tab = styled.div<{ $w: number; $active?: boolean }>`
  width: ${p => p.$w}px;
  height: ${p => (p.$active ? 31 : 28)}px;
  margin-bottom: ${p => (p.$active ? -2 : 0)}px;
  padding-top: ${p => (p.$active ? 1 : 3)}px;
  display: flex;
  align-items: center;
  justify-content: center;
  background: ${p => (p.$active ? '#fff' : '#f0f0f0')};
  border-right: 1px solid #dedede;
`
const PaneTitle = styled.div`
  display: flex;
  align-items: center;
  justify-content: space-between;
  height: 25px;
  flex: none;
  margin-top: 3px;
  padding: 0 3px 0 2px;
  background: #d9d8d9;
  border-bottom: 1px solid #bbb;
  font-size: 15px;
  color: #222;
`
const HistoryList = styled.div`
  height: 178px;
  flex: none;
  margin: 5px 0 7px;
  padding: 2px 2px;
  background: #fff;
  border: 1px solid #7d7d7d;
`
const HistoryRow = styled.div`
  height: 21px;
  padding-left: 5px;
  display: flex;
  align-items: center;
  background: #d9d8d9;
  font-size: 15px;
  color: #333;
`
const GenerateRow = styled.div`
  display: flex;
  align-items: center;
  height: 34px;
  flex: none;
  margin-top: 5px;
  padding: 0 0 6px 18px;
  gap: 7px;
  background: #f7f7f7;
  border-top: 1px solid #8a8a8a;
  border-right: 1px solid #ccc;
  font-size: 15px;
  color: #333;
`
const Check = styled.span<{ $dim?: boolean }>`
  width: 19px;
  height: 19px;
  flex: none;
  display: flex;
  background: #fff;
  border: 1px solid ${p => (p.$dim ? '#ccc' : '#444')};
`
const AtlasBox = styled.div`
  flex: 1;
  min-height: 0;
  padding: 21px 15px 0 15px;
  border: 2px solid #6d6d6d;
`
const GroupBox = styled.div`
  border: 1px solid #e4e4e4;
  padding: 0 13px;
  margin-bottom: 21px;
`
const GroupHead = styled.div`
  display: flex;
  align-items: center;
  width: fit-content;
  height: 24px;
  margin: -9px 0 0 -10px;
  padding-right: 10px;
  gap: 9px;
  background: #f0f0f0;
  font-size: 15.500px;
  font-weight: 700;
  color: #333;
`
const Triangle = styled.span<{ $up?: boolean; $color?: string }>`
  width: 0;
  height: 0;
  flex: none;
  border-left: 8px solid transparent;
  border-right: 8px solid transparent;
  ${p => (p.$up ? 'border-bottom' : 'border-top')}: 11px solid ${p => p.$color || '#6e6e6e'};
`
const FormGrid = styled.div`
  display: grid;
  grid-template-columns: 120px 384px 42px;
  grid-template-rows: 30px 22px 30px 30px 30px;
  row-gap: 10.500px;
  padding: 10px 0 13px;
  align-items: center;
  font-size: 15px;
  color: #8b8b8b;
`
const FieldLabel = styled.span`
  white-space: nowrap;
`
const CheckLabel = styled.label<{ $span?: boolean }>`
  display: flex;
  align-items: center;
  gap: 6px;
  white-space: nowrap;
  grid-column: ${p => (p.$span ? '1 / -1' : 'auto')};
  font-size: 15px;
  color: #8b8b8b;
`
const DisabledCombo = styled.div<{ $wide?: boolean; $height?: number }>`
  height: ${p => p.$height || 29}px;
  grid-column: ${p => (p.$wide ? '2 / 4' : 'auto')};
  width: ${p => (p.$wide ? 427 : 384)}px;
  display: flex;
  align-items: center;
  justify-content: flex-end;
  padding-right: 6px;
  background: #c9c8ca;
`
const ComboCaret = styled.span`
  border-left: 5px solid transparent;
  border-right: 5px solid transparent;
  border-top: 7px solid #8f8f8f;
`
const LightCombo = styled.div`
  width: 384px;
  height: 30px;
  display: flex;
  align-items: center;
  justify-content: flex-end;
  padding-right: 6px;
  background: linear-gradient(90deg, #f0f0f0 0 356px, #fff 356px);
  border: 1px solid #d2d2d2;
  color: #aaa;
`
const TextField = styled.div<{ $w: number }>`
  width: ${p => p.$w}px;
  height: 28px;
  flex: none;
  display: flex;
  align-items: center;
  padding-left: 3px;
  background: #f1f1f1;
  border: 1px solid #d2d2d2;
  font-size: 15px;
  color: #8b8b8b;
  white-space: nowrap;
`
const ExprButton = styled.span`
  width: 30px;
  height: 28px;
  flex: none;
  margin-left: 12px;
  display: flex;
  align-items: center;
  justify-content: center;
  background: #c9c8ca;
  font-family: "DejaVu Serif", serif;
  color: #858585;
  font-size: 22px;
`
const SortArrow = styled.span`
  margin-left: 18px;
  display: flex;
`
const OutputBody = styled.div`
  display: flex;
  flex-direction: column;
  padding: 7px 0 15px;
  font-size: 15px;
  color: #8b8b8b;
`
const OutputRow = styled.div`
  display: flex;
  align-items: center;
  margin: 10px 0 12px;
`
const ComposerFooter = styled.div`
  height: 38px;
  flex: none;
  display: flex;
  padding: 7px 0 0 465px;
  position: relative;
`
const ZoomCombo = styled.div`
  width: 144px;
  height: 29px;
  display: flex;
  align-items: center;
  justify-content: space-between;
  padding: 0 5px 0 7px;
  background: #fff;
  border: 1px solid #9c9c9c;
  font-size: 15px;
  color: #333;
`
const ResizeGrip = styled.span`
  position: absolute;
  right: 3px;
  bottom: 4px;
  display: flex;
`
const Mnemonic = styled.span`
  text-decoration: underline;
  text-underline-offset: 2px;
  text-decoration-thickness: 1px;
`

const sideIcons: [React.ReactNode, boolean][] = [
  [<AddLine />, false], [<AddGrid />, false], [<Feather />, false], [<Elephant />, true], [<Globe />, true],
  [<Globe dark />, false], [<Globe v />, true], [<Comma />, false], [<Wms />, false], [<Line2 />, true],
]
const menuItems = [['C', 'omposer'], ['E', 'dit'], ['V', 'iew'], ['L', 'ayout'], ['A', 'tlas'], ['S', 'ettings']]
const toolsTop = [<Hand />, <ZoomRect />, <SelectTool />, <MoveContent />, <NodeTool />]
const toolsBottom = [<AddMap />, <AddImage />, <AddLabel />, <AddLegend />, <AddBar />, <AddShape />, <AddNode />, <AddArrow />, <AddTable />, <AddHtml />]

export default function App() {
  return (
    <>
      <GlobalStyle />
      <Desktop>
        <Backdrop width="2048" height="1152" viewBox="0 0 2048 1152">
          <path d="M1568 0H1838L1842 22H1575z" fill="#7bd2f2" />
          <path d="M1838 0H2048V760L2014 880V22H1842z" fill="#2a6c9d" />
          <path d="M2014 760L2048 700V1152H1832L1900 1000z" fill="#1f97cc" />
          <path d="M0 680L75 1152H0z" fill="#8ed7f1" />
          <path d="M1502 1152L1516 1130H1546L1544 1152z" fill="#72c8ee" />
          <path d="M1544 1152L1546 1130H1750L1742 1152z" fill="#52c0ea" />
          <path d="M1742 1152L1750 1130H1838L1832 1152z" fill="#2ab0e6" />
          <path d="M1832 1152L1838 1130H2020L2048 1152z" fill="#20a0d8" />
          <path d="M1272 1135L1247 1152" stroke="#8ed7f1" strokeWidth="1.600" />
        </Backdrop>
        <MainWindow>
          <TitleBar>
            <QgisLogo />
            QGIS 2.18.13
            <MainControls>
              <Minus size={18} strokeWidth={1.2} />
              <RestoreIcon />
              <X size={20} strokeWidth={1.2} />
            </MainControls>
          </TitleBar>
          <MainMenu>
            <span>Project</span><span>Edit</span><span>View</span><span>Layer</span><span>Settings</span><span>Plugins</span>
            <span>Vector</span><span>Raster</span><span>Database</span><span>Web</span><span>Processing</span><span>Help</span>
          </MainMenu>
          <MainToolbar $h={48}>
            <GripV />
            <MainSlot><NewDoc /></MainSlot>
            <MainSlot><Folder /></MainSlot>
            <MainSlot><Save /></MainSlot>
          </MainToolbar>
          <MainToolbar $h={50}>
            <GripV />
            <MainSlot><Pencils /></MainSlot>
            <MainSlot><Pencil /></MainSlot>
            <MainSlot><Save gray /></MainSlot>
          </MainToolbar>
          <Workspace>
            <SideBar>
              <GripH />
              <SideIcons>
                {sideIcons.map(([icon, caret], i) => (
                  <SideRow key={i}>{icon}{caret && <Caret />}</SideRow>
                ))}
              </SideIcons>
              <GripH />
            </SideBar>
            <Docks>
              <DockTitle>Advanced Digitizing</DockTitle>
              <DockFill>C</DockFill>
              <DockTitle>Layers Panel</DockTitle>
              <DockTools><Brush /><Clip /></DockTools>
              <LayerTree>
                <LayerRow><CheckSlot /><Check><TickMark /></Check></LayerRow>
                <LayerRow $selected><CheckSlot><Proj /></CheckSlot><Check><TickMark /></Check></LayerRow>
                <LayerRow $indent={61}><Check /></LayerRow>
                <LayerRow $indent={61}><Check /></LayerRow>
                <LayerRow $indent={61}><Check /></LayerRow>
                <LayerRow $indent={61}><Check /></LayerRow>
              </LayerTree>
            </Docks>
            <MapArea />
          </Workspace>
          <StatusBar>
            <StatusLabel $w={83}>Coordinate</StatusLabel>
            <StatusInput $w={217} $center>565016,2335170</StatusInput>
            <StatusIcon $w={32}><Compass /></StatusIcon>
            <StatusLabel $w={14} />
            <StatusLabel $w={43}>Scale</StatusLabel>
            <StatusInput $w={122} $muted>1:132,430<ScaleArrow><ChevronDown size={16} /></ScaleArrow></StatusInput>
            <StatusIcon $w={33} $on><Lock gray s={24} /></StatusIcon>
            <StatusLabel $w={11} />
            <StatusLabel $w={71}>Magnifier</StatusLabel>
            <StatusInput $w={103}>100%<SpinButtons /></StatusInput>
            <StatusLabel $w={11} />
            <StatusLabel $w={75}>Rotation</StatusLabel>
            <StatusInput $w={102}>0.0<SpinButtons /></StatusInput>
            <StatusLabel $w={10} />
            <Check><TickMark /></Check>
            <StatusLabel $w={6} />
            <StatusLabel $w={79}>Render</StatusLabel>
            <StatusIcon $w={22}><Globe2 /></StatusIcon>
            <StatusLabel $w={4} />
            <StatusLabel $w={117}>EPSG:32644</StatusLabel>
            <StatusIcon $w={22}><MsgBubble /></StatusIcon>
          </StatusBar>
          <Taskbar>
            <StartButton><WinLogo /></StartButton>
            <SearchBox>
              <Cortana />
              Type here to search
              <SearchMic><Mic size={26} strokeWidth={1.5} /></SearchMic>
            </SearchBox>
            <TaskApps>
              <TaskApp><TaskView /></TaskApp>
              <TaskApp><EdgeLogo /></TaskApp>
              <TaskApp $open><ExplorerLogo /></TaskApp>
              <TaskApp><PcLogo /></TaskApp>
              <TaskApp $open><ChromeLogo /></TaskApp>
              <TaskApp><ExcelLogo /></TaskApp>
              <TaskApp><OutlookLogo /></TaskApp>
              <TaskApp><MailLogo /></TaskApp>
              <TaskApp><SearchGlobe /></TaskApp>
              <TaskApp $open><PptLogo /></TaskApp>
              <TaskApp $focused><QgisTask /></TaskApp>
              <TaskApp $open><PaintLogo /></TaskApp>
            </TaskApps>
            <Tray>
              <TrayIcon $w={66}><People /></TrayIcon>
              <TrayIcon $w={36}><ChevronUp size={26} strokeWidth={1.4} /></TrayIcon>
              <TrayIcon $w={36}><Network /></TrayIcon>
              <TrayIcon $w={32}><VolumeX size={24} strokeWidth={1.3} /></TrayIcon>
              <Clock>15:59<br />08-05-2018</Clock>
              <TrayIcon $w={46}><MessageSquare size={30} strokeWidth={1.3} /></TrayIcon>
              <TrayIcon $w={24} />
            </Tray>
          </Taskbar>
        </MainWindow>

        <Composer>
          <ComposerTitle>
            <QgisLogo />
            TAHSIL MAP
            <Controls>
              <Minus size={18} strokeWidth={1.8} />
              <Square size={17} strokeWidth={1.8} />
              <X size={24} strokeWidth={1.4} />
            </Controls>
          </ComposerTitle>
          <ComposerMenu>
            {menuItems.map(([m, rest]) => <span key={m}><Mnemonic>{m}</Mnemonic>{rest}</span>)}
          </ComposerMenu>
          <ComposerToolbar>
            <GripV />
            <Slot><Save /></Slot>
            <Sep $extra={3} />
            <Slot><NewComposer /></Slot><Slot><DupComposer /></Slot><Slot><Manager /></Slot><Slot><Folder /></Slot><Slot><Save tick /></Slot>
            <Sep $extra={4} />
            <Slot><Printer /></Slot><Slot><ExportImg /></Slot><Slot><ExportSvg /></Slot><Slot><ExportPdf /></Slot><Slot><Undo /></Slot><Slot><Undo flip /></Slot>
            <Sep /><GripV />
            <Slot><ZoomFull /></Slot><Slot><Zoom11 /></Slot><Slot><ZoomIn /></Slot><Slot><ZoomIn minus /></Slot><Slot><Refresh /></Slot>
            <Sep /><GripV />
            <Slot><Group /></Slot><Slot><Group un /></Slot><Slot><Lock /></Slot><Slot><Lock open /></Slot><Slot><Raise /></Slot><Slot><Align /></Slot>
            <Sep /><GripV />
            <Slot><AtlasMap /></Slot><Slot><Arrow dir="l" end /></Slot><Slot><Arrow dir="l" /></Slot>
            <PageCombo>1<ComboArrow><ChevronDown size={16} /></ComboArrow></PageCombo>
            <Slot><Arrow dir="r" /></Slot><Slot><Arrow dir="r" end /></Slot><Slot><Printer gray /></Slot><Slot><ExportGray /></Slot><Slot><AtlasSettings /></Slot>
          </ComposerToolbar>
          <ComposerMain>
            <ToolColumn>
              <GripH />
              {toolsTop.map((icon, i) => <ToolSlot key={i} $active={i === 2}>{icon}</ToolSlot>)}
              <ToolSep />
              {toolsBottom.map((icon, i) => <ToolSlot key={i}>{icon}</ToolSlot>)}
            </ToolColumn>
            <CanvasArea>
              <HRuler><HRulerDrawing /></HRuler>
              <CanvasRow>
                <VRuler><VRulerDrawing /></VRuler>
                <Canvas><Page /></Canvas>
              </CanvasRow>
            </CanvasArea>
            <DockColumn>
              <TabRow>
                <Tab $w={70}>Items</Tab>
                <Tab $w={156} $active>Command history</Tab>
              </TabRow>
              <PaneTitle>Command history<X size={18} strokeWidth={3} color="#111" /></PaneTitle>
              <HistoryList><HistoryRow>&lt;empty&gt;</HistoryRow></HistoryList>
              <TabRow>
                <Tab $w={116}>Composition</Tab>
                <Tab $w={141}>Item properties</Tab>
                <Tab $w={150} $active>Atlas generation</Tab>
              </TabRow>
              <PaneTitle>Atlas generation<X size={18} strokeWidth={3} color="#111" /></PaneTitle>
              <GenerateRow><Check />Generate an atlas</GenerateRow>
              <AtlasBox>
                <GroupBox>
                  <GroupHead><Triangle />Configuration</GroupHead>
                  <FormGrid>
                    <FieldLabel>Coverage layer</FieldLabel>
                    <DisabledCombo $wide $height={30}><ComboCaret /></DisabledCombo>
                    <CheckLabel $span><Check $dim />Hidden coverage layer</CheckLabel>
                    <FieldLabel>Page name</FieldLabel>
                    <LightCombo><ChevronDown size={18} /></LightCombo>
                    <ExprButton>ε</ExprButton>
                    <CheckLabel><Check $dim />Filter with</CheckLabel>
                    <TextField $w={384} />
                    <ExprButton>ε</ExprButton>
                    <CheckLabel><Check $dim />Sort by</CheckLabel>
                    <DisabledCombo><ComboCaret /></DisabledCombo>
                    <SortArrow><Triangle $up $color="#8f8f8f" /></SortArrow>
                  </FormGrid>
                </GroupBox>
                <GroupBox>
                  <GroupHead><Triangle />Output</GroupHead>
                  <OutputBody>
                    <FieldLabel>Output filename expression</FieldLabel>
                    <OutputRow>
                      <TextField $w={505}>'output_'||@atlas_featurenumber</TextField>
                      <ExprButton>ε</ExprButton>
                    </OutputRow>
                    <CheckLabel><Check $dim />Single file export when possible</CheckLabel>
                  </OutputBody>
                </GroupBox>
              </AtlasBox>
            </DockColumn>
          </ComposerMain>
          <ComposerFooter>
            <ZoomCombo>26.5%<ChevronDown size={18} color="#666" /></ZoomCombo>
            <ResizeGrip><Grip /></ResizeGrip>
          </ComposerFooter>
        </Composer>
      </Desktop>
    </>
  )
}
